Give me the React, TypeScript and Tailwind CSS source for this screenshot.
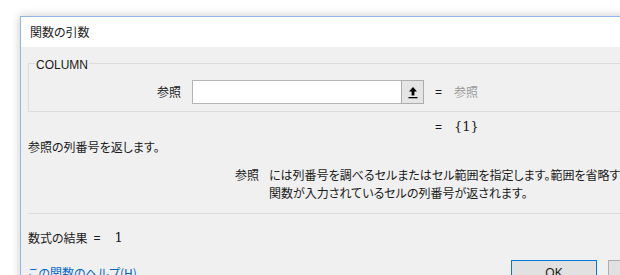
import React from 'react';

const jp = "font-['Meiryo_UI','Noto_Sans_CJK_JP',sans-serif] [font-feature-settings:'palt']";

function PickButton() {
  return (
    <div className="-ml-px flex h-[24px] w-[23px] items-center justify-center border border-[#adadad] bg-[#e5e5e5]">
      <svg width="10" height="13" viewBox="0 0 10 13">
        <path d="M5 1 L9 5.5 H6.4 V9.5 H3.6 V5.5 H1 Z" fill="#000" />
        <rect x="0.5" y="11" width="9" height="1.3" fill="#000" />
      </svg>
    </div>
  );
}

export default function App() {
  return (
    <div className={`h-[275px] w-[620px] overflow-hidden bg-white text-[12px] leading-[16px] text-[#1a1a1a] ${jp}`}>
      <div className="ml-[20px] mt-[16px] w-[700px] border-l border-t border-[#8fb6e6] bg-[#f0f0f0] shadow-[0_0_9px_rgba(0,0,0,0.22)]">
        {/* Title bar */}
        <div className="flex h-[30px] items-center bg-white pl-[9px] text-[12px]">関数の引数</div>

        <div className="px-[7px] pb-[20px]">
          {/* Argument group */}
          <div className="relative mt-[16px] h-[49px] border border-[#dcdcdc] pt-[16px]">
            <span className="absolute left-[6px] top-[-7px] bg-[#f0f0f0] px-px font-['Liberation_Sans','Noto_Sans_CJK_JP',sans-serif]">
              COLUMN
            </span>
            <div className="flex items-center">
              <span className="w-[152px] text-right">参照</span>
              <div className="ml-[11px] h-[24px] w-[210px] border border-[#b4b4b4] bg-white" />
              <PickButton />
              <span className="ml-[11px] font-['Liberation_Sans',sans-serif]">=</span>
              <span className="ml-[12px] text-[#9a9a9a]">参照</span>
            </div>
          </div>

          <div className="mt-[7px] flex">
            <span className="ml-[407px] font-['Liberation_Sans',sans-serif]">=</span>
            <span className="ml-[12px] font-['DejaVu_Serif',serif] text-[13px]">{'{1}'}</span>
          </div>

          <div className="mt-[4px]">参照の列番号を返します。</div>

          <div className="mt-[11px] flex leading-[18px]">
            <span className="ml-[207px] w-[34px]">参照</span>
            <div>
              <div className="whitespace-nowrap">には列番号を調べるセルまたはセル範囲を指定します。範囲を省略すると、COLUMN</div>
              <div className="whitespace-nowrap">関数が入力されているセルの列番号が返されます。</div>
            </div>
          </div>

          <div className="mt-[11px] h-px bg-[#dcdcdc]" />

          <div className="mt-[16px] flex items-center">
            <span>数式の結果</span>
            <span className="ml-[6px] font-['Liberation_Sans',sans-serif]">=</span>
            <span className="ml-[14px] font-['DejaVu_Serif',serif] text-[13px]">1</span>
          </div>

          <div className="mt-[14px] flex items-center">
            <a className="w-[483px] text-[#0066cc]">この関数のヘルプ(H)</a>
            <button className="h-[26px] w-[86px] border border-[#0078d7] bg-[#e1e1e1] font-['Liberation_Sans',sans-serif]">
              OK
            </button>
            <button className="ml-[11px] h-[26px] w-[86px] border border-[#adadad] bg-[#e1e1e1]">キャンセル</button>
          </div>
        </div>
      </div>
    </div>
  );
}
